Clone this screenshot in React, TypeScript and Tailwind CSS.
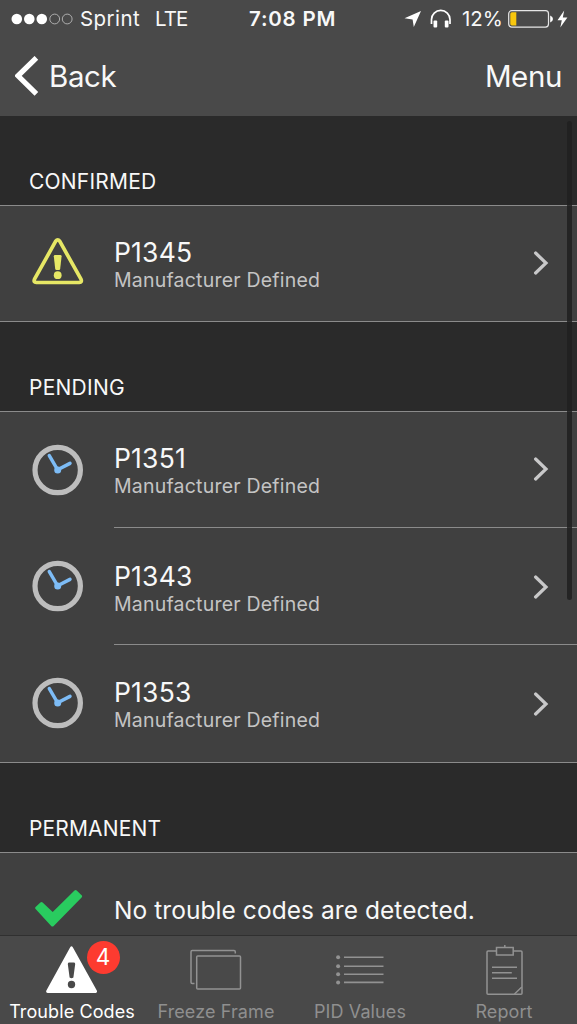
import type { ReactNode } from 'react';

type Code = { id: string; detail: string };

const CONFIRMED: Code[] = [{ id: 'P1345', detail: 'Manufacturer Defined' }];

const PENDING: Code[] = [
  { id: 'P1351', detail: 'Manufacturer Defined' },
  { id: 'P1343', detail: 'Manufacturer Defined' },
  { id: 'P1353', detail: 'Manufacturer Defined' },
];

const PENDING_ROWS = [
  'h-[115px] pb-px',
  'h-[117px] border-t border-[#8b8b8b] pt-[2px]',
  'h-[118px] border-t border-[#8b8b8b]',
];

function WarningIcon() {
  return (
    <svg width="52" height="48" viewBox="0 0 52 48" fill="none" className="mb-[3px]">
      <path
        d="M23.7 3.2 Q25.7 0.6 27.7 3.2 L49 41.2 Q50.3 44.2 47.2 44.5 H4.4 Q1.2 44.2 2.5 41.2 Z"
        stroke="#e6e765"
        strokeWidth="3.7"
        strokeLinejoin="round"
      />
      <path d="M21.8 18.2 Q21.8 17 23 17 H28.4 Q29.6 17 29.6 18.2 L28.2 30.8 Q28 32 27 32 H24.4 Q23.4 32 23.2 30.8 Z" fill="#e6e765" />
      <circle cx="25.7" cy="37.2" r="3.9" fill="#e6e765" />
    </svg>
  );
}

function ClockIcon() {
  return (
    <svg width="52" height="52" viewBox="0 0 52 52" fill="none">
      <circle cx="25.7" cy="26" r="22.7" stroke="#bdbdbd" strokeWidth="5.2" />
      <path d="M17.3 11.6 L25.6 25.8 L38 19.4" stroke="#7dbcf6" strokeWidth="3.5" strokeLinecap="round" />
      <circle cx="25.7" cy="26" r="3.5" fill="#7dbcf6" />
    </svg>
  );
}

function Chevron() {
  return (
    <svg width="16" height="24" viewBox="0 0 16 24" fill="none">
      <path d="M2.6 2 L13 12 L2.6 22" stroke="#c8c8c9" strokeWidth="3.2" strokeLinecap="round" />
    </svg>
  );
}

function SectionTitle({ title, className }: { title: string; className: string }) {
  return (
    <div className="h-[89px] shrink-0 bg-[#2a2a2a] pl-[29px] pt-[52px]">
      <h2 className={`text-[21px] leading-7 ${className}`}>{title}</h2>
    </div>
  );
}

function CodeRow({ code, icon, className }: { code: Code; icon: ReactNode; className: string }) {
  return (
    <li className="flex items-stretch">
      <div className="flex w-[114px] shrink-0 items-center pl-8">{icon}</div>
      <div className={`flex flex-1 items-center justify-between pr-7 ${className}`}>
        <div className="pt-px">
          <p className="text-[26.5px] leading-8 tracking-[0.2px]">{code.id}</p>
          <p className="text-[19.5px] leading-6 tracking-[0.21px] text-[#c4c4c4]">{code.detail}</p>
        </div>
        <Chevron />
      </div>
    </li>
  );
}

function StatusBar() {
  return (
    <div className="flex h-[38px] items-center text-[20.5px] leading-6">
      <svg width="64" height="14" viewBox="0 0 64 14" className="ml-[11px]">
        {[5.8, 18.3, 30.8].map((x) => (
          <circle key={x} cx={x} cy="7" r="5.3" fill="#fff" />
        ))}
        {[43.7, 56.2].map((x) => (
          <circle key={x} cx={x} cy="7" r="4.9" fill="none" stroke="#b8b8b8" strokeWidth="0.9" />
        ))}
      </svg>
      <span className="ml-[5px] w-[75px] whitespace-nowrap tracking-[0.45px]">Sprint</span>
      <span className="w-[94px] whitespace-nowrap tracking-[-0.9px]">LTE</span>
      <span className="w-[155px] whitespace-nowrap font-semibold tracking-[0.8px]">7:08 PM</span>
      <svg width="18" height="18" viewBox="0 0 18 18" className="shrink-0">
        <path d="M17 1 L9.8 17 L8.6 9.5 L0.5 8.3 Z" fill="#fff" />
      </svg>
      <svg width="22" height="20" viewBox="0 0 22 20" fill="none" className="ml-2 shrink-0">
        <path d="M1.5 15 V10.5 A9.2 9 0 0 1 20 10.5 V15" stroke="#fff" strokeWidth="1.7" />
        <rect x="3.5" y="11.5" width="3.7" height="7" rx="1" fill="#fff" />
        <rect x="14.8" y="11.5" width="3.7" height="7" rx="1" fill="#fff" />
      </svg>
      <span className="ml-[10px] w-[46px] whitespace-nowrap tracking-[-0.1px]">12%</span>
      <svg width="46" height="18" viewBox="0 0 46 18" fill="none" className="shrink-0">
        <rect x="0.7" y="0.7" width="39.8" height="16.4" rx="3" stroke="#e6e6e6" strokeWidth="1.2" />
        <path d="M2.3 4 Q2.3 2.3 4 2.3 H8.3 V15.5 H4 Q2.3 15.5 2.3 13.8 Z" fill="#f8c70d" />
        <path d="M42.2 5.6 Q45 6.8 45 9 T42.2 12.4 Z" fill="#fff" />
      </svg>
      <svg width="11" height="18" viewBox="0 0 11 18" className="ml-[3px] shrink-0">
        <path d="M7.2 0.5 L0.5 10.2 H4.8 L3.3 17.5 L10.4 7.6 H5.8 Z" fill="#fff" />
      </svg>
    </div>
  );
}

function NavBar() {
  return (
    <nav className="flex h-[76px] items-center justify-between px-[15px] text-[29.5px] leading-9">
      <button className="flex items-center">
        <svg width="24" height="40" viewBox="0 0 24 40" fill="none">
          <path d="M21.4 1.8 L3 19.8 L21.4 37.8" stroke="#fff" strokeWidth="5.2" />
        </svg>
        <span className="ml-[10px] tracking-[-0.4px]">Back</span>
      </button>
      <button className="tracking-[-0.4px]">Menu</button>
    </nav>
  );
}

function Tab({ label, active, children }: { label: string; active?: boolean; children: ReactNode }) {
  return (
    <button className={`flex h-full flex-1 flex-col items-center ${active ? 'text-white' : 'text-[#8f8f8f]'}`}>
      <div className="relative h-16 w-[52px]">{children}</div>
      <span className="whitespace-nowrap text-[18px] leading-6 tracking-[0.1px]">{label}</span>
    </button>
  );
}

function TabBar() {
  return (
    <footer className="flex h-[89px] shrink-0 border-t border-[#303030] bg-[#494949] pr-px">
      <Tab active label="Trouble Codes">
        <svg width="52" height="63" viewBox="0 0 52 63">
          <path
            fillRule="evenodd"
            d="M24.2 11.2 Q25.5 9.2 26.8 11.2 L50.8 54.5 Q51.7 56.6 49.6 57 H1.6 Q-0.5 56.6 0.4 54.5 Z M21.8 28 L23.6 41.5 Q25.5 43 27.4 41.5 L29.2 28 Q29.2 26.6 27.6 26.6 H23.4 Q21.8 26.6 21.8 28 Z M25.5 44.8 A3.7 3.7 0 1 0 25.5 52.2 A3.7 3.7 0 1 0 25.5 44.8 Z"
            fill="#fff"
          />
        </svg>
        <span className="absolute left-[41px] top-[5px] flex size-[33px] items-center justify-center rounded-full bg-[#fd3b30] pr-px text-[22.5px] leading-none text-white">
          4
        </span>
      </Tab>
      <Tab label="Freeze Frame">
        <svg width="52" height="63" viewBox="0 0 52 63" fill="none" stroke="#929292" strokeWidth="1.5">
          <path d="M4.5 47.5 H2.2 Q1 47.5 1 46.3 V15.7 Q1 14.5 2.2 14.5 H44 Q45.3 14.5 45.3 15.7 V17.5" />
          <rect x="6.7" y="20" width="43.8" height="33" rx="1" />
        </svg>
      </Tab>
      <Tab label="PID Values">
        <svg width="52" height="63" viewBox="0 0 52 63" fill="none">
          {[21.2, 30.2, 38.3, 46.4].map((y) => (
            <g key={y}>
              <circle cx="4.1" cy={y} r="2" fill="#929292" />
              <path d={`M10 ${y} H49.5`} stroke="#929292" strokeWidth="1.6" />
            </g>
          ))}
        </svg>
      </Tab>
      <Tab label="Report">
        <svg width="52" height="63" viewBox="0 0 52 63" fill="none" stroke="#929292" strokeWidth="1.5">
          <path d="M18.5 15 H10 Q9 15 9 16 V57.3 Q9 58.3 10 58.3 H43 Q44 58.3 44 57.3 V16 Q44 15 43 15 H35" />
          <rect x="18.5" y="11.5" width="16.7" height="7.5" />
          <path d="M26.8 9 V11.5 M14 31.3 H39 M14 36.8 H33.8 M14 42.3 H39 M36.5 58 L43.8 51" />
        </svg>
      </Tab>
    </footer>
  );
}

export default function App() {
  return (
    <div className="relative flex h-[1024px] w-[577px] flex-col overflow-hidden bg-[#2a2a2a] font-['Inter',sans-serif] text-[#f8f8f8]">
      <header className="h-[116px] shrink-0 bg-[#494949]">
        <StatusBar />
        <NavBar />
      </header>

      <main className="flex min-h-0 flex-1 flex-col">
        <SectionTitle title="CONFIRMED" className="tracking-[0.2px]" />
        <ul className="shrink-0 border-y border-[#8b8b8b] bg-[#404040]">
          {CONFIRMED.map((code) => (
            <CodeRow key={code.id} code={code} icon={<WarningIcon />} className="h-[115px] pb-px" />
          ))}
        </ul>

        <SectionTitle title="PENDING" className="tracking-[0.25px]" />
        <ul className="shrink-0 border-y border-[#8b8b8b] bg-[#404040]">
          {PENDING.map((code, i) => (
            <CodeRow key={code.id} code={code} icon={<ClockIcon />} className={PENDING_ROWS[i]} />
          ))}
        </ul>

        <SectionTitle title="PERMANENT" className="tracking-[0.15px]" />
        <div className="flex flex-1 border-t border-[#8b8b8b] bg-[#404040]">
          <div className="w-[114px] shrink-0 pl-[35px] pt-9">
            <svg width="48" height="39" viewBox="0 0 48 39">
              <path
                d="M0.6 20 Q-0.4 18.9 0.6 17.9 L5.4 13.6 Q6.5 12.6 7.6 13.6 L17.7 23 L39.5 1.6 Q40.6 0.6 41.7 1.6 L46.6 6.2 Q47.7 7.3 46.6 8.4 L18.7 37 Q17.4 38.2 16.2 37 Z"
                fill="#29cc5f"
              />
            </svg>
          </div>
          <p className="pt-[41px] text-[24.5px] leading-8 tracking-[0.06px]">No trouble codes are detected.</p>
        </div>
      </main>

      <TabBar />

      {/* scroll indicator */}
      <div className="absolute right-[5px] top-[121px] h-[479px] w-[5px] rounded-full bg-[#202020]/85" />
    </div>
  );
}
